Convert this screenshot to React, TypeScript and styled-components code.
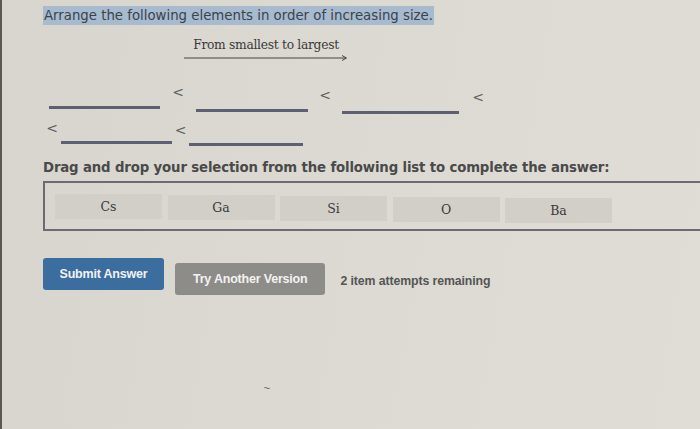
import styled, { createGlobalStyle } from "styled-components";

export const GlobalStyle = createGlobalStyle`
  html, body {
    margin: 0;
    padding: 0;
  }
  body {
    width: 700px;
    height: 429px;
    overflow: hidden;
    background: linear-gradient(100deg, #d8d5ce 0%, #dddad3 55%, #e0ddd7 100%);
    font-family: "DejaVu Sans", "Liberation Sans", sans-serif;
  }
`;

const Page = styled.div`
  height: 429px;
  box-sizing: border-box;
  border-left: 2px solid #5a5853;
  padding: 5px 0 0 41px;
`;

const Prompt = styled.div`
  display: inline-block;
  font-size: 13.3px;
  color: #384350;
  background: #a8bacd;
  padding: 0 1px;
  line-height: 19px;
`;

const Direction = styled.div`
  margin: 13px 0 0 141px;
  width: 164px;
  display: flex;
  flex-direction: column;
  align-items: center;
`;

const DirectionLabel = styled.span`
  font-family: "DejaVu Serif", "Liberation Serif", serif;
  font-size: 12.3px;
  color: #3a3a3a;
  letter-spacing: -0.3px;
`;

const Arrow = styled.svg`
  display: block;
  margin-top: 3px;
`;

const Line = styled.div`
  display: flex;
  align-items: flex-start;
  height: 34px;
`;

const Blank = styled.div<{ $w: number; $drop: number }>`
  width: ${(p) => p.$w}px;
  height: 3px;
  background: #5d5f73;
  margin-top: ${(p) => p.$drop}px;
`;

const Less = styled.span<{ $drop: number; $gap: number }>`
  font-family: "DejaVu Sans", sans-serif;
  font-size: 14px;
  color: #5e5e5e;
  margin-top: ${(p) => p.$drop}px;
  width: ${(p) => p.$gap}px;
  text-align: center;
`;

const Rows = styled.div`
  margin-top: 20px;
`;

const Instruction = styled.div`
  margin-top: 11px;
  font-size: 13.3px;
  font-weight: bold;
  color: #4a4a4a;
  letter-spacing: -0.15px;
`;

const Tray = styled.div`
  margin-top: 6px;
  border-top: 2px solid #6c6a72;
  border-bottom: 2px solid #6c6a72;
  border-left: 2px solid #6c6a72;
  height: 46px;
  display: flex;
  align-items: center;
  gap: 5.5px;
  padding-left: 10px;
`;

const Chip = styled.div<{ $drop: number }>`
  width: 107px;
  height: 25px;
  margin-top: ${(p) => p.$drop}px;
  background: #d2cfc9;
  display: flex;
  align-items: center;
  justify-content: center;
  font-family: "DejaVu Serif", "Liberation Serif", serif;
  font-size: 12.5px;
  color: #3a3a3a;
`;

const Actions = styled.div`
  margin-top: 22px;
  display: flex;
  align-items: center;
  gap: 11px;
`;

const Button = styled.div<{ $tone: "blue" | "gray"; $drop: number }>`
  height: 32px;
  padding: 0 ${(p) => (p.$tone === "blue" ? 16.5 : 18)}px;
  margin-top: ${(p) => p.$drop}px;
  border-radius: 3px;
  display: flex;
  align-items: center;
  font-family: "Liberation Sans", Arial, sans-serif;
  font-weight: bold;
  font-size: 12.5px;
  color: #f2f2f2;
  background: ${(p) => (p.$tone === "blue" ? "#3b6d9e" : "#8e8c88")};
  letter-spacing: -0.2px;
`;

const Attempts = styled.span`
  margin: 14px 0 0 4px;
  font-family: "Liberation Sans", Arial, sans-serif;
  font-weight: bold;
  font-size: 12.3px;
  color: #555;
  letter-spacing: -0.1px;
`;

const Smudge = styled.span`
  display: block;
  margin: 88px 0 0 220px;
  font-size: 9px;
  color: #555;
  transform: rotate(8deg);
  width: 12px;
`;

const items = ["Cs", "Ga", "Si", "O", "Ba"];

export default function App() {
  return (
    <>
      <GlobalStyle />
      <Page>
        <Prompt>Arrange the following elements in order of increasing size.</Prompt>
        <Direction>
          <DirectionLabel>From smallest to largest</DirectionLabel>
          <Arrow width="164" height="6" viewBox="0 0 164 6">
            <line x1="0" y1="3" x2="162" y2="3" stroke="#444" strokeWidth="1" />
            <path d="M158 0.5 L162.5 3 L158 5.5" fill="none" stroke="#444" strokeWidth="1" />
          </Arrow>
        </Direction>
        <Rows>
          <Line>
            <Blank $w={111} $drop={25} style={{ marginLeft: 6 }} />
            <Less $drop={3} $gap={36}>&lt;</Less>
            <Blank $w={112} $drop={28} />
            <Less $drop={6} $gap={34}>&lt;</Less>
            <Blank $w={117} $drop={30} />
            <Less $drop={8} $gap={38}>&lt;</Less>
          </Line>
          <Line>
            <Less $drop={5} $gap={18}>&lt;</Less>
            <Blank $w={111} $drop={26} />
            <Less $drop={7} $gap={17}>&lt;</Less>
            <Blank $w={114} $drop={28} />
          </Line>
        </Rows>
        <Instruction>Drag and drop your selection from the following list to complete the answer:</Instruction>
        <Tray>
          {items.map((el, i) => (
            <Chip key={el} $drop={i * 2}>
              {el}
            </Chip>
          ))}
        </Tray>
        <Actions>
          <Button $tone="blue" $drop={0}>Submit Answer</Button>
          <Button $tone="gray" $drop={10}>Try Another Version</Button>
          <Attempts>2 item attempts remaining</Attempts>
        </Actions>
        <Smudge>~</Smudge>
      </Page>
    </>
  );
}
